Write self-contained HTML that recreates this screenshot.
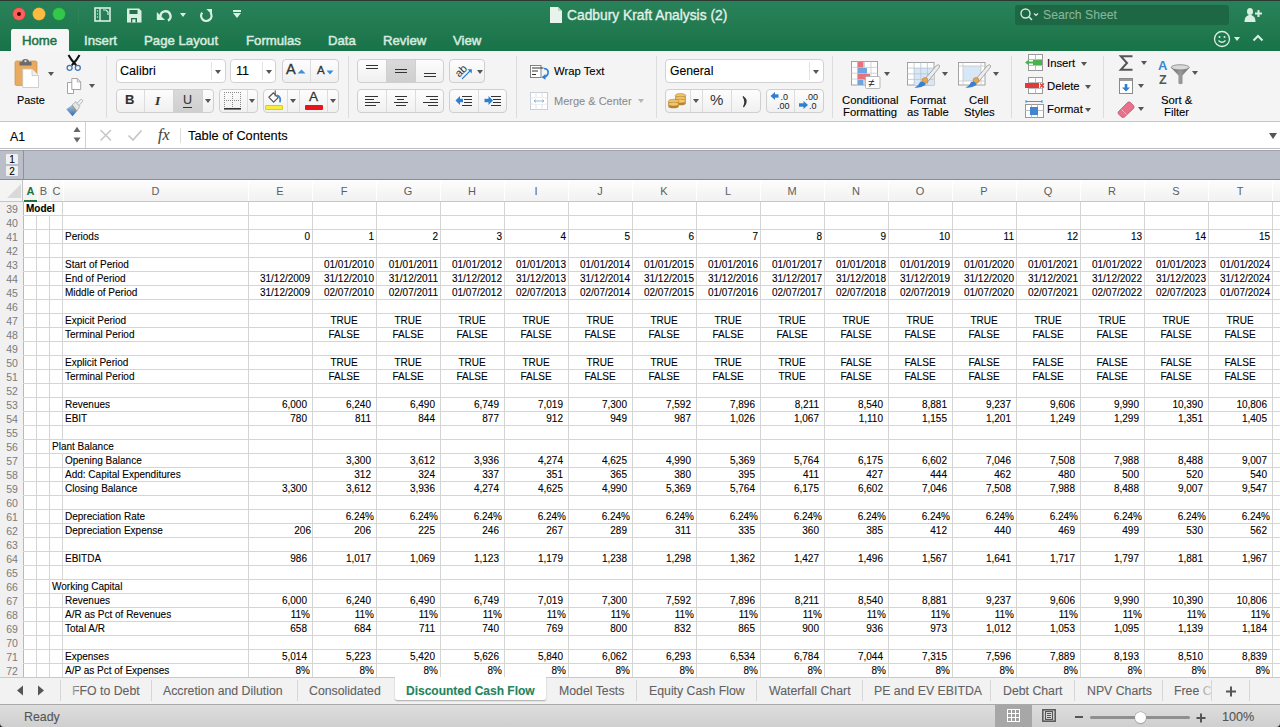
<!DOCTYPE html>
<html><head><meta charset="utf-8"><style>
*{box-sizing:border-box}
html,body{margin:0;padding:0}
body{width:1280px;height:727px;position:relative;overflow:hidden;font-family:"Liberation Sans",sans-serif;background:#fff;-webkit-text-stroke:0.1px currentColor}
.abs{position:absolute}
#title{position:absolute;left:0;top:0;width:1280px;height:51px;background:linear-gradient(#288259,#227a51 25px,#187349);border-top:1px solid #2a3a30}
#ribbon{position:absolute;left:0;top:51px;width:1280px;height:71px;background:#f4f4f4;border-bottom:1px solid #c6c6c6}
#fbar{position:absolute;left:0;top:122px;width:1280px;height:27px;background:#fff;border-bottom:1px solid #bdbdbd}
#outline{position:absolute;left:0;top:150px;width:1280px;height:30px;background:#babec8;border-top:1px solid #9fa3ab;border-bottom:1px solid #8a8d94}
#colhdr{position:absolute;left:0;top:180px;width:1280px;height:22px;background:linear-gradient(#fdfdfd,#f1f1f1);border-bottom:1px solid #c6c6c6}
.chd{position:absolute;top:1px;height:21px;line-height:21px;text-align:center;font-size:11px;color:#5a5a5a;-webkit-text-stroke:0}
.csep{position:absolute;top:0;width:1px;height:21px;background:#fff}
#grid .rh{position:absolute;left:0;width:24px;height:14px;line-height:16px;text-align:center;font-size:10.5px;color:#7a7a7a;-webkit-text-stroke:0}
#rhbg{position:absolute;left:0;top:202px;width:24px;height:475px;background:#f1f1f1;border-right:1px solid #b9b9b9}
.hl{position:absolute;left:23px;width:1257px;height:1px;background:#d5d5d5}
.vl{position:absolute;top:202px;width:1px;height:475px;background:#d5d5d5}
.cov{position:absolute;background:#fff}
.ct{position:absolute;height:14px;line-height:16px;font-size:10px;color:#000;white-space:nowrap}
.ct.b{font-weight:bold}
.rr{text-align:right}
.cc{width:64px;text-align:center}
#tabs{position:absolute;left:0;top:677px;width:1280px;height:28px;background:#f2f2f2;border-top:1px solid #c9c9c9;border-bottom:1px solid #a9a9a9}
#status{position:absolute;left:0;top:705px;width:1280px;height:22px;background:linear-gradient(#dedede,#cfcfcf)}
.tab{position:absolute;top:0;height:26px;line-height:26px;font-size:12.3px;color:#626262;white-space:nowrap}
.tsep{position:absolute;top:2px;width:1px;height:21px;background:#d6d6d6}
.btn{position:absolute;background:linear-gradient(#fdfdfd,#f0f0f0);border:1px solid #cfcfcf;border-radius:4px}
.dv{position:absolute;top:0;bottom:0;width:1px;background:#d8d8d8}
.rsep{position:absolute;top:56px;width:1px;height:61px;background:#dcdcdc}
.rt{position:absolute;font-size:11.3px;color:#000;white-space:nowrap}
.tri{position:absolute;width:0;height:0;border-left:3px solid transparent;border-right:3px solid transparent;border-top:4px solid #555}
</style></head><body>
<div id="title">
<div class="abs" style="left:13px;top:7px;width:12px;height:12px;border-radius:6px;background:#fc605c;box-shadow:0 0 0 0.5px #de3f3b"></div>
<div class="abs" style="left:33px;top:7px;width:12px;height:12px;border-radius:6px;background:#fdbc40;box-shadow:0 0 0 0.5px #dea236"></div>
<div class="abs" style="left:53px;top:7px;width:12px;height:12px;border-radius:6px;background:#34c84a;box-shadow:0 0 0 0.5px #27aa35"></div>
<div class="abs" style="left:17px;top:11px;width:4px;height:4px;border-radius:2px;background:#4d0000"></div>
<div class="abs" style="left:78px;top:6px;width:1px;height:16px;background:#2e8356"></div>
<svg class="abs" style="left:93px;top:5px" width="20" height="18" viewBox="0 0 20 18"><rect x="2" y="2" width="15" height="13" fill="none" stroke="#d9efe3" stroke-width="1.6"/><line x1="7" y1="2" x2="7" y2="15" stroke="#d9efe3" stroke-width="1.4"/><circle cx="4.5" cy="5" r=".7" fill="#d9efe3"/><circle cx="4.5" cy="8" r=".7" fill="#d9efe3"/><circle cx="4.5" cy="11" r=".7" fill="#d9efe3"/><path d="M10 4h3l2 2v3" fill="none" stroke="#d9efe3" stroke-width="1.2"/></svg>
<svg class="abs" style="left:125px;top:6px" width="18" height="17" viewBox="0 0 18 17"><path d="M2 1.5h12l2.5 2.5v11.5h-14.5z" fill="#d9efe3"/><rect x="4.5" y="3" width="8" height="4" fill="#217346"/><rect x="6" y="11" width="6" height="4.5" fill="#217346"/><rect x="7.3" y="12.3" width="3.2" height="3.2" fill="#d9efe3"/></svg>
<svg class="abs" style="left:154px;top:6px" width="20" height="16" viewBox="0 0 20 16"><path d="M2.8 5v8h8.2z" fill="#d9efe3"/><path d="M6.5 9.5A5 5 0 1 1 14 13.6" fill="none" stroke="#d9efe3" stroke-width="2.4"/></svg>
<div class="tri" style="left:180px;top:12px;border-top-color:#d9efe3"></div>
<svg class="abs" style="left:198px;top:4px" width="18" height="18" viewBox="0 0 18 18"><path d="M4.2 7.6A5.2 5.2 0 1 0 12.6 7.8" fill="none" stroke="#d9efe3" stroke-width="2.3"/><path d="M8.3 4h5.7v5.8z" fill="#d9efe3"/></svg>
<div class="abs" style="left:233px;top:9px;width:8px;height:1.5px;background:#d9efe3"></div><div class="tri" style="left:233px;top:12px;border-left-width:4px;border-right-width:4px;border-top:5px solid #d9efe3"></div>
<svg class="abs" style="left:550px;top:6px" width="12" height="16" viewBox="0 0 12 16"><path d="M0 0h8l4 4v12h-12z" fill="#e8f3ec"/><path d="M8 0v4h4" fill="#b9d6c4"/></svg>
<div class="abs" style="left:567px;top:5px;height:20px;line-height:20px;font-size:13.8px;color:#e3f1e8;-webkit-text-stroke:.35px #e3f1e8">Cadbury Kraft Analysis (2)</div>
<div class="abs" style="left:1015px;top:4px;width:214px;height:20px;border-radius:3px;background:#1d6744"></div>
<svg class="abs" style="left:1019px;top:6px" width="22" height="16" viewBox="0 0 22 16"><circle cx="6.5" cy="6.5" r="4.5" fill="none" stroke="#d3e9dc" stroke-width="1.4"/><line x1="9.8" y1="9.8" x2="13" y2="13" stroke="#d3e9dc" stroke-width="1.6"/><path d="M15 6.5l2 2 2-2" fill="none" stroke="#d3e9dc" stroke-width="1.2"/></svg>
<div class="abs" style="left:1043px;top:5px;height:18px;line-height:18px;font-size:12.2px;color:#86b69a">Search Sheet</div>
<svg class="abs" style="left:1244px;top:6px" width="20" height="16" viewBox="0 0 20 16"><ellipse cx="6" cy="4.5" rx="3" ry="3.5" fill="#d9efe3"/><path d="M0.5 15c0-5 2.5-7 5.5-7s5.5 2 5.5 7z" fill="#d9efe3"/><path d="M11 6.5h7M14.5 3v7" stroke="#d9efe3" stroke-width="2"/></svg>
<div class="abs" style="left:11px;top:28px;width:58px;height:23px;background:#f6f6f6;border-radius:2px 2px 0 0"></div>
<div class="abs" style="left:22px;top:31px;height:18px;line-height:18px;font-size:13.2px;color:#217346;-webkit-text-stroke:.5px #217346">Home</div>
<div class="abs" style="left:84px;top:31px;height:18px;line-height:18px;font-size:13.2px;color:#d5ebdf;-webkit-text-stroke:.5px #d5ebdf">Insert</div>
<div class="abs" style="left:144px;top:31px;height:18px;line-height:18px;font-size:13.2px;color:#d5ebdf;-webkit-text-stroke:.5px #d5ebdf">Page Layout</div>
<div class="abs" style="left:246px;top:31px;height:18px;line-height:18px;font-size:13.2px;color:#d5ebdf;-webkit-text-stroke:.5px #d5ebdf">Formulas</div>
<div class="abs" style="left:328px;top:31px;height:18px;line-height:18px;font-size:13.2px;color:#d5ebdf;-webkit-text-stroke:.5px #d5ebdf">Data</div>
<div class="abs" style="left:383px;top:31px;height:18px;line-height:18px;font-size:13.2px;color:#d5ebdf;-webkit-text-stroke:.5px #d5ebdf">Review</div>
<div class="abs" style="left:453px;top:31px;height:18px;line-height:18px;font-size:13.2px;color:#d5ebdf;-webkit-text-stroke:.5px #d5ebdf">View</div>
<svg class="abs" style="left:1213px;top:29px" width="20" height="18" viewBox="0 0 20 18"><circle cx="9" cy="9" r="7.5" fill="none" stroke="#d9efe3" stroke-width="1.3"/><circle cx="6.5" cy="7" r="1" fill="#d9efe3"/><circle cx="11.5" cy="7" r="1" fill="#d9efe3"/><path d="M5.5 10.5q3.5 3.5 7 0" fill="none" stroke="#d9efe3" stroke-width="1.3"/></svg>
<div class="tri" style="left:1234px;top:36px;border-top-color:#d9efe3"></div>
<svg class="abs" style="left:1252px;top:33px" width="12" height="8" viewBox="0 0 12 8"><path d="M1.5 6.5l4.5-4.5 4.5 4.5" fill="none" stroke="#d9efe3" stroke-width="2"/></svg>
</div>
<div id="ribbon">
<div class="abs" style="left:106px;top:5px;width:1px;height:62px;background:#dcdcdc"></div>
<div class="abs" style="left:348px;top:5px;width:1px;height:62px;background:#dcdcdc"></div>
<div class="abs" style="left:516px;top:5px;width:1px;height:62px;background:#dcdcdc"></div>
<div class="abs" style="left:656px;top:5px;width:1px;height:62px;background:#dcdcdc"></div>
<div class="abs" style="left:832px;top:5px;width:1px;height:62px;background:#dcdcdc"></div>
<div class="abs" style="left:1011px;top:5px;width:1px;height:62px;background:#dcdcdc"></div>
<div class="abs" style="left:1103px;top:5px;width:1px;height:62px;background:#dcdcdc"></div>
<svg class="abs" style="left:14px;top:6px" width="26" height="32" viewBox="0 0 26 32"><rect x="1" y="4" width="22" height="24.5" rx="1.5" fill="#e8ab5f" stroke="#c99048" stroke-width=".7"/><path d="M5.5 8.5v-3.5h2.5a3.5 3 0 0 1 7 0h2.5v3.5z" fill="#6b6b6b"/><circle cx="11.5" cy="4.2" r="1.1" fill="#e0e0e0"/><path d="M8.7 12h9.3l6.5 6.5v12h-15.8z" fill="#fff" stroke="#c4c4c4" stroke-width=".8"/><path d="M18 12v6.5h6.5" fill="#f0f0f0" stroke="#c4c4c4" stroke-width=".8"/></svg>
<div class="tri" style="left:48px;top:21px;border-top-color:#555"></div>
<div class="rt" style="left:17px;top:42px;font-size:10.9px;line-height:14px;color:#000;">Paste</div>
<svg class="abs" style="left:60px;top:-1px" width="40" height="70" viewBox="0 0 40 70"><path d="M8.5 5Q11 10 16.2 15.2M19.5 5Q17 10 11.8 15.2" fill="none" stroke="#111" stroke-width="2"/><circle cx="9.6" cy="17.8" r="2.5" fill="none" stroke="#3d74b8" stroke-width="1.3"/><circle cx="17.8" cy="17.8" r="2.5" fill="none" stroke="#3d74b8" stroke-width="1.3"/><path d="M7.5 32.5h6v11h-6z" fill="#fff" stroke="#9a9a9a" stroke-width=".9"/><path d="M11.8 28.5h5.5l3.4 3.4v7.6h-8.9z" fill="#fff" stroke="#9a9a9a" stroke-width=".9"/><path d="M17.3 28.5v3.4h3.4" fill="none" stroke="#9a9a9a" stroke-width=".8"/><defs><linearGradient id="pb" x1="0" y1="0" x2="0" y2="1"><stop offset="0" stop-color="#a9c3dd"/><stop offset="1" stop-color="#2d6cb5"/></linearGradient></defs><path d="M6.3 59.3L12 55L16.9 61.2L12.5 66.2z" fill="url(#pb)"/><path d="M12 55L15.9 51.6L19.8 56.4L16.9 61.2z" fill="#e2e7ec" stroke="#8c939b" stroke-width=".6"/><path d="M12.3 55.6L16.6 60.8" stroke="#b08a5a" stroke-width="1"/><path d="M17 53.5L20.5 49.5a1.5 1.5 0 0 1 2 2L19 55.5z" fill="#eef0f2" stroke="#8c939b" stroke-width=".6"/></svg>
<div class="tri" style="left:89px;top:33px;border-top-color:#555"></div>
<div class="abs" style="left:116px;top:8px;width:110px;height:24px;background:#fff;border:1px solid #d2d2d2;border-radius:4px"></div>
<div class="abs" style="left:211px;top:11px;width:1px;height:18px;background:#e3e3e3"></div>
<div class="rt" style="left:120px;top:13px;font-size:12.6px;line-height:14px;color:#000;">Calibri</div>
<div class="tri" style="left:215px;top:19px;border-top-color:#555"></div>
<div class="abs" style="left:230px;top:8px;width:46px;height:24px;background:#fff;border:1px solid #d2d2d2;border-radius:4px"></div>
<div class="abs" style="left:262px;top:11px;width:1px;height:18px;background:#e3e3e3"></div>
<div class="rt" style="left:236px;top:13px;font-size:12.6px;line-height:14px;color:#000;">11</div>
<div class="tri" style="left:266px;top:19px;border-top-color:#555"></div>
<div class="btn" style="left:282px;top:8px;width:57px;height:24px;"></div>
<div class="abs" style="left:310px;top:9px;width:1px;height:22px;background:#dcdcdc"></div>
<div class="rt" style="left:286px;top:11px;font-size:14.5px;line-height:14px;color:#333;-webkit-text-stroke:.35px #333">A</div>
<svg class="abs" style="left:297px;top:18px" width="9" height="5" viewBox="0 0 9 5"><path d="M0.5 4.5l4-4 4 4z" fill="#3c8fd6"/></svg>
<div class="rt" style="left:317px;top:12px;font-size:11.5px;line-height:14px;color:#333;-webkit-text-stroke:.3px #333">A</div>
<svg class="abs" style="left:326px;top:19px" width="8" height="5" viewBox="0 0 8 5"><path d="M0.5 0.5h7l-3.5 4z" fill="#3c8fd6"/></svg>
<div class="btn" style="left:116px;top:38px;width:98px;height:24px;"></div>
<div class="abs" style="left:174px;top:39px;width:28px;height:22px;background:linear-gradient(#dadada,#cfcfcf)"></div>
<div class="abs" style="left:144px;top:39px;width:1px;height:22px;background:#dcdcdc"></div>
<div class="abs" style="left:173px;top:39px;width:1px;height:22px;background:#d2d2d2"></div>
<div class="abs" style="left:202px;top:39px;width:1px;height:22px;background:#d2d2d2"></div>
<div class="rt" style="left:125px;top:42px;font-size:13px;line-height:14px;color:#333;font-weight:bold">B</div>
<div class="rt" style="left:155px;top:42px;font-family:'Liberation Serif',serif;font-style:italic;font-weight:bold;font-size:13.5px;line-height:16px;color:#333">I</div>
<div class="rt" style="left:183px;top:42px;font-size:12.5px;line-height:14px;color:#333;">U</div>
<div class="abs" style="left:183px;top:56px;width:9px;height:1px;background:#333"></div>
<div class="tri" style="left:205px;top:48px;border-top-color:#555"></div>
<div class="btn" style="left:219px;top:38px;width:39px;height:24px;"></div>
<div class="abs" style="left:247px;top:39px;width:1px;height:22px;background:#dcdcdc"></div>
<svg class="abs" style="left:224px;top:41px" width="18" height="18" viewBox="0 0 18 18"><g fill="#8a8a8a"><rect x="0" y="0" width="1" height="1"/><rect x="0" y="2" width="1" height="1"/><rect x="0" y="4" width="1" height="1"/><rect x="0" y="6" width="1" height="1"/><rect x="0" y="8" width="1" height="1"/><rect x="0" y="10" width="1" height="1"/><rect x="0" y="12" width="1" height="1"/><rect x="0" y="14" width="1" height="1"/><rect x="2" y="0" width="1" height="1"/><rect x="2" y="8" width="1" height="1"/><rect x="4" y="0" width="1" height="1"/><rect x="4" y="8" width="1" height="1"/><rect x="6" y="0" width="1" height="1"/><rect x="6" y="8" width="1" height="1"/><rect x="8" y="0" width="1" height="1"/><rect x="8" y="2" width="1" height="1"/><rect x="8" y="4" width="1" height="1"/><rect x="8" y="6" width="1" height="1"/><rect x="8" y="8" width="1" height="1"/><rect x="8" y="10" width="1" height="1"/><rect x="8" y="12" width="1" height="1"/><rect x="8" y="14" width="1" height="1"/><rect x="10" y="0" width="1" height="1"/><rect x="10" y="8" width="1" height="1"/><rect x="12" y="0" width="1" height="1"/><rect x="12" y="8" width="1" height="1"/><rect x="14" y="0" width="1" height="1"/><rect x="14" y="8" width="1" height="1"/><rect x="16" y="0" width="1" height="1"/><rect x="16" y="2" width="1" height="1"/><rect x="16" y="4" width="1" height="1"/><rect x="16" y="6" width="1" height="1"/><rect x="16" y="8" width="1" height="1"/><rect x="16" y="10" width="1" height="1"/><rect x="16" y="12" width="1" height="1"/><rect x="16" y="14" width="1" height="1"/></g><rect x="0" y="16" width="17" height="1.6" fill="#333"/></svg>
<div class="tri" style="left:249px;top:48px;border-top-color:#555"></div>
<div class="btn" style="left:263px;top:38px;width:76px;height:24px;"></div>
<div class="abs" style="left:287px;top:39px;width:1px;height:22px;background:#dcdcdc"></div>
<div class="abs" style="left:299px;top:39px;width:1px;height:22px;background:#dcdcdc"></div>
<div class="abs" style="left:327px;top:39px;width:1px;height:22px;background:#dcdcdc"></div>
<svg class="abs" style="left:266px;top:39px" width="18" height="15" viewBox="0 0 18 15"><path d="M2.8 7.2L7.5 2.8L12.2 7.6L7.6 12.2z" fill="#fff" stroke="#555" stroke-width="1.2" stroke-linejoin="round"/><path d="M9.2 0.8v5.2" stroke="#555" stroke-width="1.1" stroke-linecap="round"/><path d="M11.5 5.5q3.5 1.5 2.5 6" fill="none" stroke="#3a86d4" stroke-width="1.8" stroke-linecap="round"/></svg>
<div class="abs" style="left:265px;top:54px;width:18px;height:5px;background:#f7ee3a;border:0.5px solid #d9cc20;border-radius:1px"></div>
<div class="tri" style="left:290px;top:48px;border-top-color:#555"></div>
<div class="rt" style="left:309px;top:39px;font-size:13.6px;line-height:14px;color:#333;-webkit-text-stroke:.3px #333">A</div>
<div class="abs" style="left:305px;top:54px;width:18px;height:5px;background:#e8131d;border-radius:1px"></div>
<div class="tri" style="left:330px;top:48px;border-top-color:#555"></div>
<div class="btn" style="left:357px;top:8px;width:87px;height:24px;"></div>
<div class="abs" style="left:386px;top:9px;width:29px;height:22px;background:linear-gradient(#dadada,#cfcfcf)"></div>
<div class="abs" style="left:386px;top:9px;width:1px;height:22px;background:#d0d0d0"></div>
<div class="abs" style="left:415px;top:9px;width:1px;height:22px;background:#d0d0d0"></div>
<div class="abs" style="left:366px;top:14px;width:12px;height:1.2px;background:#333"></div>
<div class="abs" style="left:366px;top:17px;width:12px;height:1.2px;background:#333"></div>
<div class="abs" style="left:395px;top:18px;width:12px;height:1.2px;background:#333"></div>
<div class="abs" style="left:395px;top:21px;width:12px;height:1.2px;background:#333"></div>
<div class="abs" style="left:424px;top:22px;width:12px;height:1.2px;background:#333"></div>
<div class="abs" style="left:424px;top:25px;width:12px;height:1.2px;background:#333"></div>
<div class="btn" style="left:449px;top:8px;width:36px;height:24px;"></div>
<svg class="abs" style="left:453px;top:10px" width="22" height="20" viewBox="0 0 22 20"><text x="2" y="13.5" font-size="11" font-family="Liberation Sans" fill="#333" transform="rotate(-45 8 10)">ab</text><path d="M9 18l9-9" stroke="#2f7fd0" stroke-width="1.1"/><path d="M14.5 8.2h4.3v4.3z" fill="#2f7fd0"/></svg>
<div class="tri" style="left:477px;top:19px;border-top-color:#555"></div>
<div class="btn" style="left:357px;top:38px;width:87px;height:24px;"></div>
<div class="abs" style="left:386px;top:39px;width:1px;height:22px;background:#dcdcdc"></div>
<div class="abs" style="left:415px;top:39px;width:1px;height:22px;background:#dcdcdc"></div>
<div class="abs" style="left:365px;top:45px;width:13px;height:1.2px;background:#333"></div>
<div class="abs" style="left:365px;top:48px;width:9px;height:1.2px;background:#333"></div>
<div class="abs" style="left:365px;top:51px;width:15px;height:1.2px;background:#333"></div>
<div class="abs" style="left:365px;top:54px;width:11px;height:1.2px;background:#333"></div>
<div class="abs" style="left:394.5px;top:45px;width:12px;height:1.2px;background:#333"></div>
<div class="abs" style="left:397.0px;top:48px;width:7px;height:1.2px;background:#333"></div>
<div class="abs" style="left:393.5px;top:51px;width:14px;height:1.2px;background:#333"></div>
<div class="abs" style="left:395.5px;top:54px;width:10px;height:1.2px;background:#333"></div>
<div class="abs" style="left:426px;top:45px;width:12px;height:1.2px;background:#333"></div>
<div class="abs" style="left:430px;top:48px;width:8px;height:1.2px;background:#333"></div>
<div class="abs" style="left:423px;top:51px;width:15px;height:1.2px;background:#333"></div>
<div class="abs" style="left:428px;top:54px;width:10px;height:1.2px;background:#333"></div>
<div class="btn" style="left:449px;top:38px;width:58px;height:24px;"></div>
<div class="abs" style="left:478px;top:39px;width:1px;height:22px;background:#dcdcdc"></div>
<svg class="abs" style="left:455px;top:44px" width="20" height="13" viewBox="0 0 20 13"><path d="M0.5 5.5l4.5-4.5v9z" fill="#2f7fd0"/><rect x="4" y="3.8" width="4" height="3.4" fill="#2f7fd0"/><path d="M7 1.5h10M9 4.5h8M9 7.5h8M7 10.5h10" stroke="#333" stroke-width="1.1"/></svg>
<svg class="abs" style="left:484px;top:44px" width="20" height="13" viewBox="0 0 20 13"><path d="M9 5.5l-4.5-4.5v9z" fill="#2f7fd0"/><rect x="0.5" y="3.8" width="4.5" height="3.4" fill="#2f7fd0"/><path d="M7 1.5h10M9 4.5h8M9 7.5h8M7 10.5h10" stroke="#333" stroke-width="1.1"/></svg>
<svg class="abs" style="left:530px;top:14px" width="22" height="16" viewBox="0 0 22 16"><rect x=".5" y=".5" width="10.5" height="12" fill="#fff" stroke="#777" stroke-width=".9"/><path d="M2 3h11.5M2 6h6M2 9.5h4" stroke="#333" stroke-width="1"/><path d="M14 3.5q5 .5 4 5q-.8 3-4 3.5" fill="none" stroke="#2f7fd0" stroke-width="1.7"/><path d="M15.5 9l-4 3.2 4 2.5z" fill="#2f7fd0"/></svg>
<div class="rt" style="left:554px;top:13px;font-size:11.3px;line-height:14px;color:#000;">Wrap Text</div>
<svg class="abs" style="left:530px;top:41px" width="18" height="18" viewBox="0 0 18 18"><rect x=".5" y=".5" width="17" height="17" fill="#fff" stroke="#c7d0d8"/><path d="M.5 6h17M.5 12h17M6 .5v17M12 .5v17" stroke="#dfe5ea"/><rect x="3" y="6" width="12" height="6" fill="#fff"/><path d="M4 9h10M4 9l2-1.5M4 9l2 1.5M14 9l-2-1.5M14 9l-2 1.5" stroke="#8fb0d0" stroke-width=".9"/></svg>
<div class="rt" style="left:554px;top:43px;font-size:11px;line-height:14px;color:#8d8d8d;">Merge &amp; Center</div>
<div class="tri" style="left:638px;top:48px;border-top-color:#b5b5b5"></div>
<div class="abs" style="left:665px;top:8px;width:159px;height:24px;background:#fff;border:1px solid #d2d2d2;border-radius:4px"></div>
<div class="abs" style="left:809px;top:11px;width:1px;height:18px;background:#e3e3e3"></div>
<div class="rt" style="left:670px;top:13px;font-size:12.2px;line-height:14px;color:#000;">General</div>
<div class="tri" style="left:813px;top:19px;border-top-color:#555"></div>
<div class="btn" style="left:665px;top:38px;width:96px;height:24px;"></div>
<div class="abs" style="left:690px;top:39px;width:1px;height:22px;background:#dcdcdc"></div>
<div class="abs" style="left:702px;top:39px;width:1px;height:22px;background:#dcdcdc"></div>
<div class="abs" style="left:731px;top:39px;width:1px;height:22px;background:#dcdcdc"></div>
<svg class="abs" style="left:667px;top:42px" width="22" height="17" viewBox="0 0 22 17"><path d="M8.3 2.5v2.2a5.2 2 0 0 0 10.4 0v-2.2z" fill="#b98532"/><ellipse cx="13.5" cy="2.5" rx="5.2" ry="2" fill="#f1c66a" stroke="#a8752a" stroke-width=".5"/><path d="M8.3 5.3v2.2a5.2 2 0 0 0 10.4 0v-2.2z" fill="#b98532"/><ellipse cx="13.5" cy="5.3" rx="5.2" ry="2" fill="#f1c66a" stroke="#a8752a" stroke-width=".5"/><path d="M8.3 8.1v2.2a5.2 2 0 0 0 10.4 0v-2.2z" fill="#b98532"/><ellipse cx="13.5" cy="8.1" rx="5.2" ry="2" fill="#f1c66a" stroke="#a8752a" stroke-width=".5"/><path d="M1.2999999999999998 8.3v2.2a5.2 2 0 0 0 10.4 0v-2.2z" fill="#b98532"/><ellipse cx="6.5" cy="8.3" rx="5.2" ry="2" fill="#f1c66a" stroke="#a8752a" stroke-width=".5"/><path d="M1.2999999999999998 11.1v2.2a5.2 2 0 0 0 10.4 0v-2.2z" fill="#b98532"/><ellipse cx="6.5" cy="11.1" rx="5.2" ry="2" fill="#f1c66a" stroke="#a8752a" stroke-width=".5"/></svg>
<div class="tri" style="left:693px;top:48px;border-top-color:#555"></div>
<div class="rt" style="left:710px;top:42px;font-size:15px;line-height:14px;color:#333;-webkit-text-stroke:0">%</div>
<svg class="abs" style="left:741px;top:44px" width="10" height="14" viewBox="0 0 10 14"><path d="M2 1.5q6 4.5 .5 10.5q3-5.5-.5-10.5z" fill="#333" stroke="#333" stroke-width="1.2"/></svg>
<div class="btn" style="left:766px;top:38px;width:58px;height:24px;"></div>
<div class="abs" style="left:794px;top:39px;width:1px;height:22px;background:#dcdcdc"></div>
<svg class="abs" style="left:770px;top:40px" width="24" height="20" viewBox="0 0 24 20"><path d="M0.5 5l4.5-4v8z" fill="#2f7fd0"/><rect x="4.5" y="3.3" width="4" height="3.4" fill="#2f7fd0"/><text x="10.5" y="8.5" font-size="9" font-family="Liberation Sans" fill="#222">.0</text><text x="7" y="17.5" font-size="9" font-family="Liberation Sans" fill="#222">.00</text></svg>
<svg class="abs" style="left:798px;top:40px" width="24" height="20" viewBox="0 0 24 20"><text x="7.5" y="8.5" font-size="9" font-family="Liberation Sans" fill="#222">.00</text><path d="M10 14l-4.5-4v8z" fill="#2f7fd0"/><rect x="1" y="12.3" width="5" height="3.4" fill="#2f7fd0"/><text x="11" y="17.5" font-size="9" font-family="Liberation Sans" fill="#222">.0</text></svg>
<svg class="abs" style="left:850px;top:9px" width="32" height="30" viewBox="0 0 32 30"><rect x="1.5" y="1.5" width="26" height="23.5" fill="#fff" stroke="#9a9a9a" stroke-width=".9"/><path d="M8.0 1.5v23.5M14.5 1.5v23.5M21.0 1.5v23.5M1.5 7.4h26M1.5 13.2h26M1.5 19.1h26" stroke="#c9c9c9" stroke-width=".8"/><rect x="7.5" y="2" width="6" height="5.5" fill="#e6737b"/><rect x="7.5" y="8" width="9.5" height="5.5" fill="#6da6de"/><rect x="7.5" y="14" width="12.5" height="5.5" fill="#e6737b"/><rect x="7.5" y="20" width="6" height="5" fill="#6da6de"/><rect x="15.5" y="16.5" width="14.5" height="12" rx="1" fill="#fff" stroke="#aaa" stroke-width=".8"/><text x="18.2" y="26.7" font-size="11.5" font-family="Liberation Sans" fill="#222">≠</text></svg>
<div class="tri" style="left:884px;top:21px;border-top-color:#555"></div>
<div class="rt" style="left:842px;top:42px;font-size:11.3px;line-height:14px;color:#000;">Conditional</div>
<div class="rt" style="left:843px;top:54px;font-size:11.3px;line-height:14px;color:#000;">Formatting</div>
<svg class="abs" style="left:907px;top:9px" width="36" height="30" viewBox="0 0 36 30"><rect x=".5" y="2.5" width="26.5" height="22.5" fill="#fff" stroke="#9a9a9a" stroke-width=".9"/><rect x="7" y="8" width="20" height="17" fill="#d8e7f6"/><path d="M7.1 2.5v22.5M13.8 2.5v22.5M20.4 2.5v22.5M0.5 8.1h26.5M0.5 13.8h26.5M0.5 19.4h26.5" stroke="#b8c4d0" stroke-width=".8"/><path d="M17.5 19.5L29.5 5.5Q31.5 4 32.5 5.5Q33 7 31.5 8.5L20.5 22z" fill="#ececec" stroke="#8a8a8a" stroke-width=".7"/><circle cx="18" cy="20.5" r="3" fill="#e2a659" stroke="#b07a3a" stroke-width=".5"/><path d="M15.5 21.5Q19 23 18.5 25Q13 28.5 7.5 27.5Q11.5 26 13 22z" fill="#3b7fd0"/></svg>
<div class="tri" style="left:942px;top:21px;border-top-color:#555"></div>
<div class="rt" style="left:910px;top:42px;font-size:11.3px;line-height:14px;color:#000;">Format</div>
<div class="rt" style="left:907px;top:54px;font-size:11.3px;line-height:14px;color:#000;">as Table</div>
<svg class="abs" style="left:958px;top:9px" width="36" height="30" viewBox="0 0 36 30"><rect x=".5" y="2.5" width="26.5" height="22.5" fill="#fff" stroke="#9a9a9a" stroke-width=".9"/><rect x="5" y="6" width="18" height="15" fill="#d8e7f6"/><path d="M5 2.5v22.5M.5 6h26.5M23 2.5v22.5M.5 21h26.5" stroke="#c8c8c8" stroke-width=".8"/><path d="M17.5 19.5L29.5 5.5Q31.5 4 32.5 5.5Q33 7 31.5 8.5L20.5 22z" fill="#ececec" stroke="#8a8a8a" stroke-width=".7"/><circle cx="18" cy="20.5" r="3" fill="#e2a659" stroke="#b07a3a" stroke-width=".5"/><path d="M15.5 21.5Q19 23 18.5 25Q13 28.5 7.5 27.5Q11.5 26 13 22z" fill="#3b7fd0"/></svg>
<div class="tri" style="left:993px;top:21px;border-top-color:#555"></div>
<div class="rt" style="left:969px;top:42px;font-size:11.3px;line-height:14px;color:#000;">Cell</div>
<div class="rt" style="left:964px;top:54px;font-size:11.3px;line-height:14px;color:#000;">Styles</div>
<svg class="abs" style="left:1024px;top:3px" width="20" height="18" viewBox="0 0 20 18"><rect x="4.5" y=".5" width="14" height="16" fill="#fff" stroke="#999"/><path d="M4.5 5.5h14M4.5 11.5h14M11.5 .5v16" stroke="#bbb"/><rect x="9" y="6" width="9" height="5" fill="#4caf50"/><path d="M1 8.5l4-3v6z" fill="#4caf50"/><rect x="4" y="7.5" width="6" height="2" fill="#4caf50"/></svg>
<div class="rt" style="left:1047px;top:5px;font-size:11.3px;line-height:14px;color:#000;">Insert</div>
<div class="tri" style="left:1081px;top:11px;border-top-color:#555"></div>
<svg class="abs" style="left:1024px;top:26px" width="22" height="18" viewBox="0 0 22 18"><rect x="4.5" y=".5" width="14" height="16" fill="#fff" stroke="#999"/><path d="M4.5 5.5h14M4.5 11.5h14M11.5 .5v16" stroke="#bbb"/><rect x="1" y="6" width="14" height="5" fill="#e03a3a"/><path d="M16 6.5l4 4M20 6.5l-4 4" stroke="#e03a3a" stroke-width="1.3"/></svg>
<div class="rt" style="left:1047px;top:28px;font-size:11.3px;line-height:14px;color:#000;">Delete</div>
<div class="tri" style="left:1085px;top:34px;border-top-color:#555"></div>
<svg class="abs" style="left:1024px;top:49px" width="22" height="18" viewBox="0 0 22 18"><rect x="1.5" y="4.5" width="18" height="13" fill="#fff" stroke="#999"/><path d="M1.5 10.5h18M7.5 4.5v13M13.5 4.5v13" stroke="#bbb"/><rect x="6" y="7" width="8" height="8" fill="#3f86cf"/><path d="M2 1.5h16M2 0v3M18 0v3" stroke="#3f86cf" stroke-width=".9"/></svg>
<div class="rt" style="left:1047px;top:51px;font-size:11.3px;line-height:14px;color:#000;">Format</div>
<div class="tri" style="left:1085px;top:57px;border-top-color:#555"></div>
<svg class="abs" style="left:1118px;top:3px" width="17" height="18" viewBox="0 0 17 18"><path d="M14.5 2.2H2.8L9 9L2.8 15.8H14.5" fill="none" stroke="#555" stroke-width="2" stroke-linejoin="miter"/></svg>
<div class="tri" style="left:1141px;top:10px;border-top-color:#555"></div>
<svg class="abs" style="left:1118px;top:26px" width="16" height="18" viewBox="0 0 16 18"><rect x="1.5" y="1.5" width="13" height="15" fill="#fff" stroke="#8a8a8a"/><rect x="2" y="2" width="12" height="2" fill="#9a9a9a"/><path d="M8 7v4" stroke="#2f7fd0" stroke-width="2.6"/><path d="M4 10.5h8l-4 4z" fill="#2f7fd0"/></svg>
<div class="tri" style="left:1138px;top:33px;border-top-color:#555"></div>
<svg class="abs" style="left:1117px;top:49px" width="19" height="18" viewBox="0 0 19 18"><path d="M1.5 11.5L10.5 2.5Q12 1.2 13.5 2.5L16.5 5.5Q17.8 7 16.5 8.5L7.5 17Q6 18 4.5 17L1.5 14Q.5 12.8 1.5 11.5z" fill="#e7718b" stroke="#c04a66" stroke-width=".7"/><path d="M4.5 9.5l5 5" stroke="#f4b3c2" stroke-width="1"/></svg>
<div class="tri" style="left:1138px;top:56px;border-top-color:#555"></div>
<div class="rt" style="left:1158px;top:7px;font-size:13px;line-height:14px;color:#3a86d4;font-weight:bold;line-height:16px;-webkit-text-stroke:0">A</div>
<div class="rt" style="left:1159px;top:21px;font-size:12.5px;line-height:14px;color:#555;font-weight:bold;line-height:16px;-webkit-text-stroke:0">Z</div>
<svg class="abs" style="left:1170px;top:13px" width="21" height="21" viewBox="0 0 21 21"><defs><linearGradient id="fn" x1="0" y1="0" x2="1" y2="0"><stop offset="0" stop-color="#6a6a6a"/><stop offset=".5" stop-color="#9a9a9a"/><stop offset="1" stop-color="#6a6a6a"/></linearGradient></defs><path d="M1 3.5Q10 0 19.5 3.5L12.5 11.5v8q-2 1.5-4 0v-8z" fill="url(#fn)"/><ellipse cx="10.2" cy="3.3" rx="9" ry="2.6" fill="#d9d9d9" stroke="#777" stroke-width=".7"/></svg>
<div class="tri" style="left:1192px;top:20px;border-top-color:#555"></div>
<div class="rt" style="left:1161px;top:42px;font-size:11.3px;line-height:14px;color:#000;">Sort &amp;</div>
<div class="rt" style="left:1164px;top:54px;font-size:11.3px;line-height:14px;color:#000;">Filter</div>
</div>
<div id="fbar">
<div class="abs" style="left:10px;top:6px;font-size:12.4px;line-height:18px;color:#000">A1</div>
<svg class="abs" style="left:72px;top:4px" width="10" height="18" viewBox="0 0 10 18"><path d="M1.5 6l3.5-5.2 3.5 5.2z" fill="#666"/><path d="M1.5 16.5l3.5-5 3.5 5z" fill="#666" transform="rotate(180 5 14)"/></svg>
<div class="abs" style="left:85px;top:0;width:1px;height:26px;background:#d0d0d0"></div>
<svg class="abs" style="left:99px;top:7px" width="14" height="13" viewBox="0 0 14 13"><path d="M1.5 1l10.5 10.5M12 1l-10.5 10.5" stroke="#c6c6c6" stroke-width="1.5"/></svg>
<svg class="abs" style="left:127px;top:7px" width="16" height="13" viewBox="0 0 16 13"><path d="M1.5 6.5l4.5 4.5 8.5-9.5" fill="none" stroke="#c6c6c6" stroke-width="1.7"/></svg>
<div class="abs" style="left:158px;top:3px;font-family:'Liberation Serif',serif;font-style:italic;font-size:16px;line-height:20px;color:#444">fx</div>
<div class="abs" style="left:180px;top:6px;width:1px;height:15px;background:#dcdcdc"></div>
<div class="abs" style="left:188px;top:5px;font-size:12.8px;line-height:18px;color:#000">Table of Contents</div>
<div class="tri" style="left:1269px;top:11px;border-left-width:4px;border-right-width:4px;border-top:6px solid #555"></div>
</div>
<div id="outline">
<div class="abs" style="left:23px;top:-1px;width:1px;height:30px;background:#8e9199"></div>
<div class="abs" style="left:6px;top:3px;width:12px;height:10px;background:#f0f0f0;border-radius:1px;font-size:10px;line-height:11px;text-align:center;color:#000">1</div>
<div class="abs" style="left:6px;top:15px;width:12px;height:10px;background:#f0f0f0;border-radius:1px;font-size:10px;line-height:11px;text-align:center;color:#000">2</div>
</div>
<div id="colhdr">
<div class="abs" style="left:0;top:0;width:23px;height:21px;background:#f4f4f4;border-right:1px solid #c4c4c4"></div>
<svg class="abs" style="left:6px;top:3px" width="16" height="16"><path d="M15 1v14h-14z" fill="#d9d9d9"/></svg>
<div class="chd" style="left:24px;width:13px;color:#217346;font-weight:bold">A</div>
<div class="chd" style="left:37px;width:13px;color:#5e5e5e;font-weight:normal">B</div>
<div class="csep" style="left:37px"></div>
<div class="chd" style="left:50px;width:13px;color:#5e5e5e;font-weight:normal">C</div>
<div class="csep" style="left:50px"></div>
<div class="chd" style="left:63px;width:185px;color:#5e5e5e;font-weight:normal">D</div>
<div class="csep" style="left:63px"></div>
<div class="chd" style="left:248px;width:64px;color:#5e5e5e;font-weight:normal">E</div>
<div class="csep" style="left:248px"></div>
<div class="chd" style="left:312px;width:64px;color:#5e5e5e;font-weight:normal">F</div>
<div class="csep" style="left:312px"></div>
<div class="chd" style="left:376px;width:64px;color:#5e5e5e;font-weight:normal">G</div>
<div class="csep" style="left:376px"></div>
<div class="chd" style="left:440px;width:64px;color:#5e5e5e;font-weight:normal">H</div>
<div class="csep" style="left:440px"></div>
<div class="chd" style="left:504px;width:64px;color:#5e5e5e;font-weight:normal">I</div>
<div class="csep" style="left:504px"></div>
<div class="chd" style="left:568px;width:64px;color:#5e5e5e;font-weight:normal">J</div>
<div class="csep" style="left:568px"></div>
<div class="chd" style="left:632px;width:64px;color:#5e5e5e;font-weight:normal">K</div>
<div class="csep" style="left:632px"></div>
<div class="chd" style="left:696px;width:64px;color:#5e5e5e;font-weight:normal">L</div>
<div class="csep" style="left:696px"></div>
<div class="chd" style="left:760px;width:64px;color:#5e5e5e;font-weight:normal">M</div>
<div class="csep" style="left:760px"></div>
<div class="chd" style="left:824px;width:64px;color:#5e5e5e;font-weight:normal">N</div>
<div class="csep" style="left:824px"></div>
<div class="chd" style="left:888px;width:64px;color:#5e5e5e;font-weight:normal">O</div>
<div class="csep" style="left:888px"></div>
<div class="chd" style="left:952px;width:64px;color:#5e5e5e;font-weight:normal">P</div>
<div class="csep" style="left:952px"></div>
<div class="chd" style="left:1016px;width:64px;color:#5e5e5e;font-weight:normal">Q</div>
<div class="csep" style="left:1016px"></div>
<div class="chd" style="left:1080px;width:64px;color:#5e5e5e;font-weight:normal">R</div>
<div class="csep" style="left:1080px"></div>
<div class="chd" style="left:1144px;width:64px;color:#5e5e5e;font-weight:normal">S</div>
<div class="csep" style="left:1144px"></div>
<div class="chd" style="left:1208px;width:64px;color:#5e5e5e;font-weight:normal">T</div>
<div class="csep" style="left:1208px"></div>
<div class="chd" style="left:1272px;width:64px;color:#5e5e5e;font-weight:normal">U</div>
<div class="csep" style="left:1272px"></div>
<div class="abs" style="left:24px;top:20px;width:13px;height:2px;background:#217346"></div>
</div>
<div id="rhbg"></div>
<div id="grid">
<div class="rh" style="top:201px">39</div>
<div class="rh" style="top:215px">40</div>
<div class="rh" style="top:229px">41</div>
<div class="rh" style="top:243px">42</div>
<div class="rh" style="top:257px">43</div>
<div class="rh" style="top:271px">44</div>
<div class="rh" style="top:285px">45</div>
<div class="rh" style="top:299px">46</div>
<div class="rh" style="top:313px">47</div>
<div class="rh" style="top:327px">48</div>
<div class="rh" style="top:341px">49</div>
<div class="rh" style="top:355px">50</div>
<div class="rh" style="top:369px">51</div>
<div class="rh" style="top:383px">52</div>
<div class="rh" style="top:397px">53</div>
<div class="rh" style="top:411px">54</div>
<div class="rh" style="top:425px">55</div>
<div class="rh" style="top:439px">56</div>
<div class="rh" style="top:453px">57</div>
<div class="rh" style="top:467px">58</div>
<div class="rh" style="top:481px">59</div>
<div class="rh" style="top:495px">60</div>
<div class="rh" style="top:509px">61</div>
<div class="rh" style="top:523px">62</div>
<div class="rh" style="top:537px">63</div>
<div class="rh" style="top:551px">64</div>
<div class="rh" style="top:565px">65</div>
<div class="rh" style="top:579px">66</div>
<div class="rh" style="top:593px">67</div>
<div class="rh" style="top:607px">68</div>
<div class="rh" style="top:621px">69</div>
<div class="rh" style="top:635px">70</div>
<div class="rh" style="top:649px">71</div>
<div class="rh" style="top:663px">72</div>
<div class="hl" style="top:215px"></div>
<div class="hl" style="top:229px"></div>
<div class="hl" style="top:243px"></div>
<div class="hl" style="top:257px"></div>
<div class="hl" style="top:271px"></div>
<div class="hl" style="top:285px"></div>
<div class="hl" style="top:299px"></div>
<div class="hl" style="top:313px"></div>
<div class="hl" style="top:327px"></div>
<div class="hl" style="top:341px"></div>
<div class="hl" style="top:355px"></div>
<div class="hl" style="top:369px"></div>
<div class="hl" style="top:383px"></div>
<div class="hl" style="top:397px"></div>
<div class="hl" style="top:411px"></div>
<div class="hl" style="top:425px"></div>
<div class="hl" style="top:439px"></div>
<div class="hl" style="top:453px"></div>
<div class="hl" style="top:467px"></div>
<div class="hl" style="top:481px"></div>
<div class="hl" style="top:495px"></div>
<div class="hl" style="top:509px"></div>
<div class="hl" style="top:523px"></div>
<div class="hl" style="top:537px"></div>
<div class="hl" style="top:551px"></div>
<div class="hl" style="top:565px"></div>
<div class="hl" style="top:579px"></div>
<div class="hl" style="top:593px"></div>
<div class="hl" style="top:607px"></div>
<div class="hl" style="top:621px"></div>
<div class="hl" style="top:635px"></div>
<div class="hl" style="top:649px"></div>
<div class="hl" style="top:663px"></div>
<div class="hl" style="top:677px"></div>
<div class="vl" style="left:36px"></div>
<div class="vl" style="left:49px"></div>
<div class="vl" style="left:62px"></div>
<div class="vl" style="left:312px"></div>
<div class="vl" style="left:376px"></div>
<div class="vl" style="left:440px"></div>
<div class="vl" style="left:504px"></div>
<div class="vl" style="left:568px"></div>
<div class="vl" style="left:632px"></div>
<div class="vl" style="left:696px"></div>
<div class="vl" style="left:760px"></div>
<div class="vl" style="left:824px"></div>
<div class="vl" style="left:888px"></div>
<div class="vl" style="left:952px"></div>
<div class="vl" style="left:1016px"></div>
<div class="vl" style="left:1080px"></div>
<div class="vl" style="left:1144px"></div>
<div class="vl" style="left:1208px"></div>
<div class="vl" style="left:1272px"></div>
<div class="vl" style="left:248px"></div>
<div class="cov" style="left:36px;top:202px;width:1px;height:13px"></div>
<div class="cov" style="left:49px;top:202px;width:1px;height:13px"></div>
<div class="cov" style="left:62px;top:440px;width:1px;height:13px"></div>
<div class="cov" style="left:62px;top:580px;width:1px;height:13px"></div>
<div class="ct b" style="left:26px;top:201px">Model</div>
<div class="ct" style="left:65px;top:229px">Periods</div>
<div class="ct rr" style="left:248px;width:62px;top:229px">0</div>
<div class="ct rr" style="left:312px;width:62px;top:229px">1</div>
<div class="ct rr" style="left:376px;width:62px;top:229px">2</div>
<div class="ct rr" style="left:440px;width:62px;top:229px">3</div>
<div class="ct rr" style="left:504px;width:62px;top:229px">4</div>
<div class="ct rr" style="left:568px;width:62px;top:229px">5</div>
<div class="ct rr" style="left:632px;width:62px;top:229px">6</div>
<div class="ct rr" style="left:696px;width:62px;top:229px">7</div>
<div class="ct rr" style="left:760px;width:62px;top:229px">8</div>
<div class="ct rr" style="left:824px;width:62px;top:229px">9</div>
<div class="ct rr" style="left:888px;width:62px;top:229px">10</div>
<div class="ct rr" style="left:952px;width:62px;top:229px">11</div>
<div class="ct rr" style="left:1016px;width:62px;top:229px">12</div>
<div class="ct rr" style="left:1080px;width:62px;top:229px">13</div>
<div class="ct rr" style="left:1144px;width:62px;top:229px">14</div>
<div class="ct rr" style="left:1208px;width:62px;top:229px">15</div>
<div class="ct" style="left:65px;top:257px">Start of Period</div>
<div class="ct rr" style="left:312px;width:62px;top:257px">01/01/2010</div>
<div class="ct rr" style="left:376px;width:62px;top:257px">01/01/2011</div>
<div class="ct rr" style="left:440px;width:62px;top:257px">01/01/2012</div>
<div class="ct rr" style="left:504px;width:62px;top:257px">01/01/2013</div>
<div class="ct rr" style="left:568px;width:62px;top:257px">01/01/2014</div>
<div class="ct rr" style="left:632px;width:62px;top:257px">01/01/2015</div>
<div class="ct rr" style="left:696px;width:62px;top:257px">01/01/2016</div>
<div class="ct rr" style="left:760px;width:62px;top:257px">01/01/2017</div>
<div class="ct rr" style="left:824px;width:62px;top:257px">01/01/2018</div>
<div class="ct rr" style="left:888px;width:62px;top:257px">01/01/2019</div>
<div class="ct rr" style="left:952px;width:62px;top:257px">01/01/2020</div>
<div class="ct rr" style="left:1016px;width:62px;top:257px">01/01/2021</div>
<div class="ct rr" style="left:1080px;width:62px;top:257px">01/01/2022</div>
<div class="ct rr" style="left:1144px;width:62px;top:257px">01/01/2023</div>
<div class="ct rr" style="left:1208px;width:62px;top:257px">01/01/2024</div>
<div class="ct" style="left:65px;top:271px">End of Period</div>
<div class="ct rr" style="left:248px;width:62px;top:271px">31/12/2009</div>
<div class="ct rr" style="left:312px;width:62px;top:271px">31/12/2010</div>
<div class="ct rr" style="left:376px;width:62px;top:271px">31/12/2011</div>
<div class="ct rr" style="left:440px;width:62px;top:271px">31/12/2012</div>
<div class="ct rr" style="left:504px;width:62px;top:271px">31/12/2013</div>
<div class="ct rr" style="left:568px;width:62px;top:271px">31/12/2014</div>
<div class="ct rr" style="left:632px;width:62px;top:271px">31/12/2015</div>
<div class="ct rr" style="left:696px;width:62px;top:271px">31/12/2016</div>
<div class="ct rr" style="left:760px;width:62px;top:271px">31/12/2017</div>
<div class="ct rr" style="left:824px;width:62px;top:271px">31/12/2018</div>
<div class="ct rr" style="left:888px;width:62px;top:271px">31/12/2019</div>
<div class="ct rr" style="left:952px;width:62px;top:271px">31/12/2020</div>
<div class="ct rr" style="left:1016px;width:62px;top:271px">31/12/2021</div>
<div class="ct rr" style="left:1080px;width:62px;top:271px">31/12/2022</div>
<div class="ct rr" style="left:1144px;width:62px;top:271px">31/12/2023</div>
<div class="ct rr" style="left:1208px;width:62px;top:271px">31/12/2024</div>
<div class="ct" style="left:65px;top:285px">Middle of Period</div>
<div class="ct rr" style="left:248px;width:62px;top:285px">31/12/2009</div>
<div class="ct rr" style="left:312px;width:62px;top:285px">02/07/2010</div>
<div class="ct rr" style="left:376px;width:62px;top:285px">02/07/2011</div>
<div class="ct rr" style="left:440px;width:62px;top:285px">01/07/2012</div>
<div class="ct rr" style="left:504px;width:62px;top:285px">02/07/2013</div>
<div class="ct rr" style="left:568px;width:62px;top:285px">02/07/2014</div>
<div class="ct rr" style="left:632px;width:62px;top:285px">02/07/2015</div>
<div class="ct rr" style="left:696px;width:62px;top:285px">01/07/2016</div>
<div class="ct rr" style="left:760px;width:62px;top:285px">02/07/2017</div>
<div class="ct rr" style="left:824px;width:62px;top:285px">02/07/2018</div>
<div class="ct rr" style="left:888px;width:62px;top:285px">02/07/2019</div>
<div class="ct rr" style="left:952px;width:62px;top:285px">01/07/2020</div>
<div class="ct rr" style="left:1016px;width:62px;top:285px">02/07/2021</div>
<div class="ct rr" style="left:1080px;width:62px;top:285px">02/07/2022</div>
<div class="ct rr" style="left:1144px;width:62px;top:285px">02/07/2023</div>
<div class="ct rr" style="left:1208px;width:62px;top:285px">01/07/2024</div>
<div class="ct" style="left:65px;top:313px">Expicit Period</div>
<div class="ct cc" style="left:312px;top:313px">TRUE</div>
<div class="ct cc" style="left:376px;top:313px">TRUE</div>
<div class="ct cc" style="left:440px;top:313px">TRUE</div>
<div class="ct cc" style="left:504px;top:313px">TRUE</div>
<div class="ct cc" style="left:568px;top:313px">TRUE</div>
<div class="ct cc" style="left:632px;top:313px">TRUE</div>
<div class="ct cc" style="left:696px;top:313px">TRUE</div>
<div class="ct cc" style="left:760px;top:313px">TRUE</div>
<div class="ct cc" style="left:824px;top:313px">TRUE</div>
<div class="ct cc" style="left:888px;top:313px">TRUE</div>
<div class="ct cc" style="left:952px;top:313px">TRUE</div>
<div class="ct cc" style="left:1016px;top:313px">TRUE</div>
<div class="ct cc" style="left:1080px;top:313px">TRUE</div>
<div class="ct cc" style="left:1144px;top:313px">TRUE</div>
<div class="ct cc" style="left:1208px;top:313px">TRUE</div>
<div class="ct" style="left:65px;top:327px">Terminal Period</div>
<div class="ct cc" style="left:312px;top:327px">FALSE</div>
<div class="ct cc" style="left:376px;top:327px">FALSE</div>
<div class="ct cc" style="left:440px;top:327px">FALSE</div>
<div class="ct cc" style="left:504px;top:327px">FALSE</div>
<div class="ct cc" style="left:568px;top:327px">FALSE</div>
<div class="ct cc" style="left:632px;top:327px">FALSE</div>
<div class="ct cc" style="left:696px;top:327px">FALSE</div>
<div class="ct cc" style="left:760px;top:327px">FALSE</div>
<div class="ct cc" style="left:824px;top:327px">FALSE</div>
<div class="ct cc" style="left:888px;top:327px">FALSE</div>
<div class="ct cc" style="left:952px;top:327px">FALSE</div>
<div class="ct cc" style="left:1016px;top:327px">FALSE</div>
<div class="ct cc" style="left:1080px;top:327px">FALSE</div>
<div class="ct cc" style="left:1144px;top:327px">FALSE</div>
<div class="ct cc" style="left:1208px;top:327px">FALSE</div>
<div class="ct" style="left:65px;top:355px">Explicit Period</div>
<div class="ct cc" style="left:312px;top:355px">TRUE</div>
<div class="ct cc" style="left:376px;top:355px">TRUE</div>
<div class="ct cc" style="left:440px;top:355px">TRUE</div>
<div class="ct cc" style="left:504px;top:355px">TRUE</div>
<div class="ct cc" style="left:568px;top:355px">TRUE</div>
<div class="ct cc" style="left:632px;top:355px">TRUE</div>
<div class="ct cc" style="left:696px;top:355px">TRUE</div>
<div class="ct cc" style="left:760px;top:355px">TRUE</div>
<div class="ct cc" style="left:824px;top:355px">FALSE</div>
<div class="ct cc" style="left:888px;top:355px">FALSE</div>
<div class="ct cc" style="left:952px;top:355px">FALSE</div>
<div class="ct cc" style="left:1016px;top:355px">FALSE</div>
<div class="ct cc" style="left:1080px;top:355px">FALSE</div>
<div class="ct cc" style="left:1144px;top:355px">FALSE</div>
<div class="ct cc" style="left:1208px;top:355px">FALSE</div>
<div class="ct" style="left:65px;top:369px">Terminal Period</div>
<div class="ct cc" style="left:312px;top:369px">FALSE</div>
<div class="ct cc" style="left:376px;top:369px">FALSE</div>
<div class="ct cc" style="left:440px;top:369px">FALSE</div>
<div class="ct cc" style="left:504px;top:369px">FALSE</div>
<div class="ct cc" style="left:568px;top:369px">FALSE</div>
<div class="ct cc" style="left:632px;top:369px">FALSE</div>
<div class="ct cc" style="left:696px;top:369px">FALSE</div>
<div class="ct cc" style="left:760px;top:369px">TRUE</div>
<div class="ct cc" style="left:824px;top:369px">FALSE</div>
<div class="ct cc" style="left:888px;top:369px">FALSE</div>
<div class="ct cc" style="left:952px;top:369px">FALSE</div>
<div class="ct cc" style="left:1016px;top:369px">FALSE</div>
<div class="ct cc" style="left:1080px;top:369px">FALSE</div>
<div class="ct cc" style="left:1144px;top:369px">FALSE</div>
<div class="ct cc" style="left:1208px;top:369px">FALSE</div>
<div class="ct" style="left:65px;top:397px">Revenues</div>
<div class="ct rr" style="left:248px;width:59px;top:397px">6,000</div>
<div class="ct rr" style="left:312px;width:59px;top:397px">6,240</div>
<div class="ct rr" style="left:376px;width:59px;top:397px">6,490</div>
<div class="ct rr" style="left:440px;width:59px;top:397px">6,749</div>
<div class="ct rr" style="left:504px;width:59px;top:397px">7,019</div>
<div class="ct rr" style="left:568px;width:59px;top:397px">7,300</div>
<div class="ct rr" style="left:632px;width:59px;top:397px">7,592</div>
<div class="ct rr" style="left:696px;width:59px;top:397px">7,896</div>
<div class="ct rr" style="left:760px;width:59px;top:397px">8,211</div>
<div class="ct rr" style="left:824px;width:59px;top:397px">8,540</div>
<div class="ct rr" style="left:888px;width:59px;top:397px">8,881</div>
<div class="ct rr" style="left:952px;width:59px;top:397px">9,237</div>
<div class="ct rr" style="left:1016px;width:59px;top:397px">9,606</div>
<div class="ct rr" style="left:1080px;width:59px;top:397px">9,990</div>
<div class="ct rr" style="left:1144px;width:59px;top:397px">10,390</div>
<div class="ct rr" style="left:1208px;width:59px;top:397px">10,806</div>
<div class="ct" style="left:65px;top:411px">EBIT</div>
<div class="ct rr" style="left:248px;width:59px;top:411px">780</div>
<div class="ct rr" style="left:312px;width:59px;top:411px">811</div>
<div class="ct rr" style="left:376px;width:59px;top:411px">844</div>
<div class="ct rr" style="left:440px;width:59px;top:411px">877</div>
<div class="ct rr" style="left:504px;width:59px;top:411px">912</div>
<div class="ct rr" style="left:568px;width:59px;top:411px">949</div>
<div class="ct rr" style="left:632px;width:59px;top:411px">987</div>
<div class="ct rr" style="left:696px;width:59px;top:411px">1,026</div>
<div class="ct rr" style="left:760px;width:59px;top:411px">1,067</div>
<div class="ct rr" style="left:824px;width:59px;top:411px">1,110</div>
<div class="ct rr" style="left:888px;width:59px;top:411px">1,155</div>
<div class="ct rr" style="left:952px;width:59px;top:411px">1,201</div>
<div class="ct rr" style="left:1016px;width:59px;top:411px">1,249</div>
<div class="ct rr" style="left:1080px;width:59px;top:411px">1,299</div>
<div class="ct rr" style="left:1144px;width:59px;top:411px">1,351</div>
<div class="ct rr" style="left:1208px;width:59px;top:411px">1,405</div>
<div class="ct" style="left:52px;top:439px">Plant Balance</div>
<div class="ct" style="left:65px;top:453px">Opening Balance</div>
<div class="ct rr" style="left:312px;width:59px;top:453px">3,300</div>
<div class="ct rr" style="left:376px;width:59px;top:453px">3,612</div>
<div class="ct rr" style="left:440px;width:59px;top:453px">3,936</div>
<div class="ct rr" style="left:504px;width:59px;top:453px">4,274</div>
<div class="ct rr" style="left:568px;width:59px;top:453px">4,625</div>
<div class="ct rr" style="left:632px;width:59px;top:453px">4,990</div>
<div class="ct rr" style="left:696px;width:59px;top:453px">5,369</div>
<div class="ct rr" style="left:760px;width:59px;top:453px">5,764</div>
<div class="ct rr" style="left:824px;width:59px;top:453px">6,175</div>
<div class="ct rr" style="left:888px;width:59px;top:453px">6,602</div>
<div class="ct rr" style="left:952px;width:59px;top:453px">7,046</div>
<div class="ct rr" style="left:1016px;width:59px;top:453px">7,508</div>
<div class="ct rr" style="left:1080px;width:59px;top:453px">7,988</div>
<div class="ct rr" style="left:1144px;width:59px;top:453px">8,488</div>
<div class="ct rr" style="left:1208px;width:59px;top:453px">9,007</div>
<div class="ct" style="left:65px;top:467px">Add: Capital Expenditures</div>
<div class="ct rr" style="left:312px;width:59px;top:467px">312</div>
<div class="ct rr" style="left:376px;width:59px;top:467px">324</div>
<div class="ct rr" style="left:440px;width:59px;top:467px">337</div>
<div class="ct rr" style="left:504px;width:59px;top:467px">351</div>
<div class="ct rr" style="left:568px;width:59px;top:467px">365</div>
<div class="ct rr" style="left:632px;width:59px;top:467px">380</div>
<div class="ct rr" style="left:696px;width:59px;top:467px">395</div>
<div class="ct rr" style="left:760px;width:59px;top:467px">411</div>
<div class="ct rr" style="left:824px;width:59px;top:467px">427</div>
<div class="ct rr" style="left:888px;width:59px;top:467px">444</div>
<div class="ct rr" style="left:952px;width:59px;top:467px">462</div>
<div class="ct rr" style="left:1016px;width:59px;top:467px">480</div>
<div class="ct rr" style="left:1080px;width:59px;top:467px">500</div>
<div class="ct rr" style="left:1144px;width:59px;top:467px">520</div>
<div class="ct rr" style="left:1208px;width:59px;top:467px">540</div>
<div class="ct" style="left:65px;top:481px">Closing Balance</div>
<div class="ct rr" style="left:248px;width:59px;top:481px">3,300</div>
<div class="ct rr" style="left:312px;width:59px;top:481px">3,612</div>
<div class="ct rr" style="left:376px;width:59px;top:481px">3,936</div>
<div class="ct rr" style="left:440px;width:59px;top:481px">4,274</div>
<div class="ct rr" style="left:504px;width:59px;top:481px">4,625</div>
<div class="ct rr" style="left:568px;width:59px;top:481px">4,990</div>
<div class="ct rr" style="left:632px;width:59px;top:481px">5,369</div>
<div class="ct rr" style="left:696px;width:59px;top:481px">5,764</div>
<div class="ct rr" style="left:760px;width:59px;top:481px">6,175</div>
<div class="ct rr" style="left:824px;width:59px;top:481px">6,602</div>
<div class="ct rr" style="left:888px;width:59px;top:481px">7,046</div>
<div class="ct rr" style="left:952px;width:59px;top:481px">7,508</div>
<div class="ct rr" style="left:1016px;width:59px;top:481px">7,988</div>
<div class="ct rr" style="left:1080px;width:59px;top:481px">8,488</div>
<div class="ct rr" style="left:1144px;width:59px;top:481px">9,007</div>
<div class="ct rr" style="left:1208px;width:59px;top:481px">9,547</div>
<div class="ct" style="left:65px;top:509px">Depreciation Rate</div>
<div class="ct rr" style="left:312px;width:62px;top:509px">6.24%</div>
<div class="ct rr" style="left:376px;width:62px;top:509px">6.24%</div>
<div class="ct rr" style="left:440px;width:62px;top:509px">6.24%</div>
<div class="ct rr" style="left:504px;width:62px;top:509px">6.24%</div>
<div class="ct rr" style="left:568px;width:62px;top:509px">6.24%</div>
<div class="ct rr" style="left:632px;width:62px;top:509px">6.24%</div>
<div class="ct rr" style="left:696px;width:62px;top:509px">6.24%</div>
<div class="ct rr" style="left:760px;width:62px;top:509px">6.24%</div>
<div class="ct rr" style="left:824px;width:62px;top:509px">6.24%</div>
<div class="ct rr" style="left:888px;width:62px;top:509px">6.24%</div>
<div class="ct rr" style="left:952px;width:62px;top:509px">6.24%</div>
<div class="ct rr" style="left:1016px;width:62px;top:509px">6.24%</div>
<div class="ct rr" style="left:1080px;width:62px;top:509px">6.24%</div>
<div class="ct rr" style="left:1144px;width:62px;top:509px">6.24%</div>
<div class="ct rr" style="left:1208px;width:62px;top:509px">6.24%</div>
<div class="ct" style="left:65px;top:523px">Depreciation Expense</div>
<div class="ct rr" style="left:248px;width:63px;top:523px">206</div>
<div class="ct rr" style="left:312px;width:59px;top:523px">206</div>
<div class="ct rr" style="left:376px;width:59px;top:523px">225</div>
<div class="ct rr" style="left:440px;width:59px;top:523px">246</div>
<div class="ct rr" style="left:504px;width:59px;top:523px">267</div>
<div class="ct rr" style="left:568px;width:59px;top:523px">289</div>
<div class="ct rr" style="left:632px;width:59px;top:523px">311</div>
<div class="ct rr" style="left:696px;width:59px;top:523px">335</div>
<div class="ct rr" style="left:760px;width:59px;top:523px">360</div>
<div class="ct rr" style="left:824px;width:59px;top:523px">385</div>
<div class="ct rr" style="left:888px;width:59px;top:523px">412</div>
<div class="ct rr" style="left:952px;width:59px;top:523px">440</div>
<div class="ct rr" style="left:1016px;width:59px;top:523px">469</div>
<div class="ct rr" style="left:1080px;width:59px;top:523px">499</div>
<div class="ct rr" style="left:1144px;width:59px;top:523px">530</div>
<div class="ct rr" style="left:1208px;width:59px;top:523px">562</div>
<div class="ct" style="left:65px;top:551px">EBITDA</div>
<div class="ct rr" style="left:248px;width:59px;top:551px">986</div>
<div class="ct rr" style="left:312px;width:59px;top:551px">1,017</div>
<div class="ct rr" style="left:376px;width:59px;top:551px">1,069</div>
<div class="ct rr" style="left:440px;width:59px;top:551px">1,123</div>
<div class="ct rr" style="left:504px;width:59px;top:551px">1,179</div>
<div class="ct rr" style="left:568px;width:59px;top:551px">1,238</div>
<div class="ct rr" style="left:632px;width:59px;top:551px">1,298</div>
<div class="ct rr" style="left:696px;width:59px;top:551px">1,362</div>
<div class="ct rr" style="left:760px;width:59px;top:551px">1,427</div>
<div class="ct rr" style="left:824px;width:59px;top:551px">1,496</div>
<div class="ct rr" style="left:888px;width:59px;top:551px">1,567</div>
<div class="ct rr" style="left:952px;width:59px;top:551px">1,641</div>
<div class="ct rr" style="left:1016px;width:59px;top:551px">1,717</div>
<div class="ct rr" style="left:1080px;width:59px;top:551px">1,797</div>
<div class="ct rr" style="left:1144px;width:59px;top:551px">1,881</div>
<div class="ct rr" style="left:1208px;width:59px;top:551px">1,967</div>
<div class="ct" style="left:52px;top:579px">Working Capital</div>
<div class="ct" style="left:65px;top:593px">Revenues</div>
<div class="ct rr" style="left:248px;width:59px;top:593px">6,000</div>
<div class="ct rr" style="left:312px;width:59px;top:593px">6,240</div>
<div class="ct rr" style="left:376px;width:59px;top:593px">6,490</div>
<div class="ct rr" style="left:440px;width:59px;top:593px">6,749</div>
<div class="ct rr" style="left:504px;width:59px;top:593px">7,019</div>
<div class="ct rr" style="left:568px;width:59px;top:593px">7,300</div>
<div class="ct rr" style="left:632px;width:59px;top:593px">7,592</div>
<div class="ct rr" style="left:696px;width:59px;top:593px">7,896</div>
<div class="ct rr" style="left:760px;width:59px;top:593px">8,211</div>
<div class="ct rr" style="left:824px;width:59px;top:593px">8,540</div>
<div class="ct rr" style="left:888px;width:59px;top:593px">8,881</div>
<div class="ct rr" style="left:952px;width:59px;top:593px">9,237</div>
<div class="ct rr" style="left:1016px;width:59px;top:593px">9,606</div>
<div class="ct rr" style="left:1080px;width:59px;top:593px">9,990</div>
<div class="ct rr" style="left:1144px;width:59px;top:593px">10,390</div>
<div class="ct rr" style="left:1208px;width:59px;top:593px">10,806</div>
<div class="ct" style="left:65px;top:607px">A/R as Pct of Revenues</div>
<div class="ct rr" style="left:248px;width:62px;top:607px">11%</div>
<div class="ct rr" style="left:312px;width:62px;top:607px">11%</div>
<div class="ct rr" style="left:376px;width:62px;top:607px">11%</div>
<div class="ct rr" style="left:440px;width:62px;top:607px">11%</div>
<div class="ct rr" style="left:504px;width:62px;top:607px">11%</div>
<div class="ct rr" style="left:568px;width:62px;top:607px">11%</div>
<div class="ct rr" style="left:632px;width:62px;top:607px">11%</div>
<div class="ct rr" style="left:696px;width:62px;top:607px">11%</div>
<div class="ct rr" style="left:760px;width:62px;top:607px">11%</div>
<div class="ct rr" style="left:824px;width:62px;top:607px">11%</div>
<div class="ct rr" style="left:888px;width:62px;top:607px">11%</div>
<div class="ct rr" style="left:952px;width:62px;top:607px">11%</div>
<div class="ct rr" style="left:1016px;width:62px;top:607px">11%</div>
<div class="ct rr" style="left:1080px;width:62px;top:607px">11%</div>
<div class="ct rr" style="left:1144px;width:62px;top:607px">11%</div>
<div class="ct rr" style="left:1208px;width:62px;top:607px">11%</div>
<div class="ct" style="left:65px;top:621px">Total A/R</div>
<div class="ct rr" style="left:248px;width:59px;top:621px">658</div>
<div class="ct rr" style="left:312px;width:59px;top:621px">684</div>
<div class="ct rr" style="left:376px;width:59px;top:621px">711</div>
<div class="ct rr" style="left:440px;width:59px;top:621px">740</div>
<div class="ct rr" style="left:504px;width:59px;top:621px">769</div>
<div class="ct rr" style="left:568px;width:59px;top:621px">800</div>
<div class="ct rr" style="left:632px;width:59px;top:621px">832</div>
<div class="ct rr" style="left:696px;width:59px;top:621px">865</div>
<div class="ct rr" style="left:760px;width:59px;top:621px">900</div>
<div class="ct rr" style="left:824px;width:59px;top:621px">936</div>
<div class="ct rr" style="left:888px;width:59px;top:621px">973</div>
<div class="ct rr" style="left:952px;width:59px;top:621px">1,012</div>
<div class="ct rr" style="left:1016px;width:59px;top:621px">1,053</div>
<div class="ct rr" style="left:1080px;width:59px;top:621px">1,095</div>
<div class="ct rr" style="left:1144px;width:59px;top:621px">1,139</div>
<div class="ct rr" style="left:1208px;width:59px;top:621px">1,184</div>
<div class="ct" style="left:65px;top:649px">Expenses</div>
<div class="ct rr" style="left:248px;width:59px;top:649px">5,014</div>
<div class="ct rr" style="left:312px;width:59px;top:649px">5,223</div>
<div class="ct rr" style="left:376px;width:59px;top:649px">5,420</div>
<div class="ct rr" style="left:440px;width:59px;top:649px">5,626</div>
<div class="ct rr" style="left:504px;width:59px;top:649px">5,840</div>
<div class="ct rr" style="left:568px;width:59px;top:649px">6,062</div>
<div class="ct rr" style="left:632px;width:59px;top:649px">6,293</div>
<div class="ct rr" style="left:696px;width:59px;top:649px">6,534</div>
<div class="ct rr" style="left:760px;width:59px;top:649px">6,784</div>
<div class="ct rr" style="left:824px;width:59px;top:649px">7,044</div>
<div class="ct rr" style="left:888px;width:59px;top:649px">7,315</div>
<div class="ct rr" style="left:952px;width:59px;top:649px">7,596</div>
<div class="ct rr" style="left:1016px;width:59px;top:649px">7,889</div>
<div class="ct rr" style="left:1080px;width:59px;top:649px">8,193</div>
<div class="ct rr" style="left:1144px;width:59px;top:649px">8,510</div>
<div class="ct rr" style="left:1208px;width:59px;top:649px">8,839</div>
<div class="ct" style="left:65px;top:663px">A/P as Pct of Expenses</div>
<div class="ct rr" style="left:248px;width:62px;top:663px">8%</div>
<div class="ct rr" style="left:312px;width:62px;top:663px">8%</div>
<div class="ct rr" style="left:376px;width:62px;top:663px">8%</div>
<div class="ct rr" style="left:440px;width:62px;top:663px">8%</div>
<div class="ct rr" style="left:504px;width:62px;top:663px">8%</div>
<div class="ct rr" style="left:568px;width:62px;top:663px">8%</div>
<div class="ct rr" style="left:632px;width:62px;top:663px">8%</div>
<div class="ct rr" style="left:696px;width:62px;top:663px">8%</div>
<div class="ct rr" style="left:760px;width:62px;top:663px">8%</div>
<div class="ct rr" style="left:824px;width:62px;top:663px">8%</div>
<div class="ct rr" style="left:888px;width:62px;top:663px">8%</div>
<div class="ct rr" style="left:952px;width:62px;top:663px">8%</div>
<div class="ct rr" style="left:1016px;width:62px;top:663px">8%</div>
<div class="ct rr" style="left:1080px;width:62px;top:663px">8%</div>
<div class="ct rr" style="left:1144px;width:62px;top:663px">8%</div>
<div class="ct rr" style="left:1208px;width:62px;top:663px">8%</div>
</div>
<div id="tabs">
<svg class="abs" style="left:14px;top:7px" width="34" height="12"><path d="M9 0.5v10l-6-5z" fill="#555"/><path d="M24 0.5v10l6-5z" fill="#555"/></svg>
<div class="tsep" style="left:60px"></div>
<div class="tsep" style="left:151px"></div>
<div class="tsep" style="left:297px"></div>
<div class="tsep" style="left:636px"></div>
<div class="tsep" style="left:756px"></div>
<div class="tsep" style="left:862px"></div>
<div class="tsep" style="left:990px"></div>
<div class="tsep" style="left:1074px"></div>
<div class="tsep" style="left:1162px"></div>
<div class="tsep" style="left:1211px"></div>
<div class="tsep" style="left:1249px"></div>
<div class="abs" style="left:395px;top:-1px;width:151px;height:23px;background:#fff;border-radius:0 0 2px 2px;box-shadow:0 1px 1.5px rgba(0,0,0,.3)"></div>
<div class="tab" style="left:72px">FFO to Debt</div>
<div class="tab" style="left:163px">Accretion and Dilution</div>
<div class="tab" style="left:309px">Consolidated</div>
<div class="tab" style="left:559px">Model Tests</div>
<div class="tab" style="left:649px">Equity Cash Flow</div>
<div class="tab" style="left:769px">Waterfall Chart</div>
<div class="tab" style="left:874px">PE and EV EBITDA</div>
<div class="tab" style="left:1003px">Debt Chart</div>
<div class="tab" style="left:1087px">NPV Charts</div>
<div class="abs" style="left:1174px;top:0;width:37px;height:26px;overflow:hidden"><div class="tab" style="left:0">Free Cash</div></div>
<div class="abs" style="left:1199px;top:0;width:12px;height:26px;background:linear-gradient(90deg,rgba(242,242,242,.35),rgba(242,242,242,.75))"></div>
<div class="abs" style="left:61px;top:0;width:20px;height:26px;background:linear-gradient(90deg,#f2f2f2 10%,rgba(242,242,242,0))"></div>
<div class="tab" style="left:406px;top:0px;font-weight:bold;font-size:12px;color:#23845a">Discounted Cash Flow</div>
<svg class="abs" style="left:1225px;top:8px" width="12" height="12"><path d="M6 0.5v10M1 5.5h10" stroke="#555" stroke-width="2"/></svg>
</div>
<div id="status">
<div class="abs" style="left:24px;top:3px;font-size:12.4px;line-height:18px;color:#555">Ready</div>
<div class="abs" style="left:995px;top:0;width:37px;height:23px;background:#a7a7a7"></div>
<svg class="abs" style="left:1007px;top:4px" width="13" height="13"><rect x="0" y="0" width="13" height="13" fill="#fff"/><rect x="1" y="1" width="3" height="3" fill="#a0a0a0"/><rect x="1" y="5" width="3" height="3" fill="#a0a0a0"/><rect x="1" y="9" width="3" height="3" fill="#a0a0a0"/><rect x="5" y="1" width="3" height="3" fill="#a0a0a0"/><rect x="5" y="5" width="3" height="3" fill="#a0a0a0"/><rect x="5" y="9" width="3" height="3" fill="#a0a0a0"/><rect x="9" y="1" width="3" height="3" fill="#a0a0a0"/><rect x="9" y="5" width="3" height="3" fill="#a0a0a0"/><rect x="9" y="9" width="3" height="3" fill="#a0a0a0"/></svg>
<svg class="abs" style="left:1042px;top:4px" width="15" height="14"><rect x=".8" y=".8" width="12.4" height="11.4" fill="none" stroke="#555" stroke-width="1.5"/><rect x="3.5" y="2.5" width="7" height="8" fill="none" stroke="#555" stroke-width="1.1"/><path d="M5 4.5h4M5 6.5h4M5 8.5h4" stroke="#555" stroke-width="1"/></svg>
<div class="abs" style="left:1075px;top:11px;width:8px;height:2px;background:#555"></div>
<div class="abs" style="left:1090px;top:10.5px;width:100px;height:3.5px;border-radius:2px;background:#8f8f8f"></div>
<div class="abs" style="left:1135px;top:6.5px;width:11px;height:11px;border-radius:6px;background:#fff;box-shadow:0 0 0 .6px #9a9a9a,0 1px 1px rgba(0,0,0,.2)"></div>
<svg class="abs" style="left:1196px;top:8px" width="10" height="10"><path d="M5 0.5v9M.5 5h9" stroke="#555" stroke-width="2"/></svg>
<div class="abs" style="left:1222px;top:3px;font-size:12.6px;line-height:18px;color:#555">100%</div>
</div>
<svg style="position:absolute;left:0;top:723px" width="4" height="4"><path d="M0 0A4 4 0 0 0 4 4H0z" fill="#222"/></svg><svg style="position:absolute;left:1276px;top:723px" width="4" height="4"><path d="M4 0A4 4 0 0 1 0 4H4z" fill="#222"/></svg>
</body></html>
